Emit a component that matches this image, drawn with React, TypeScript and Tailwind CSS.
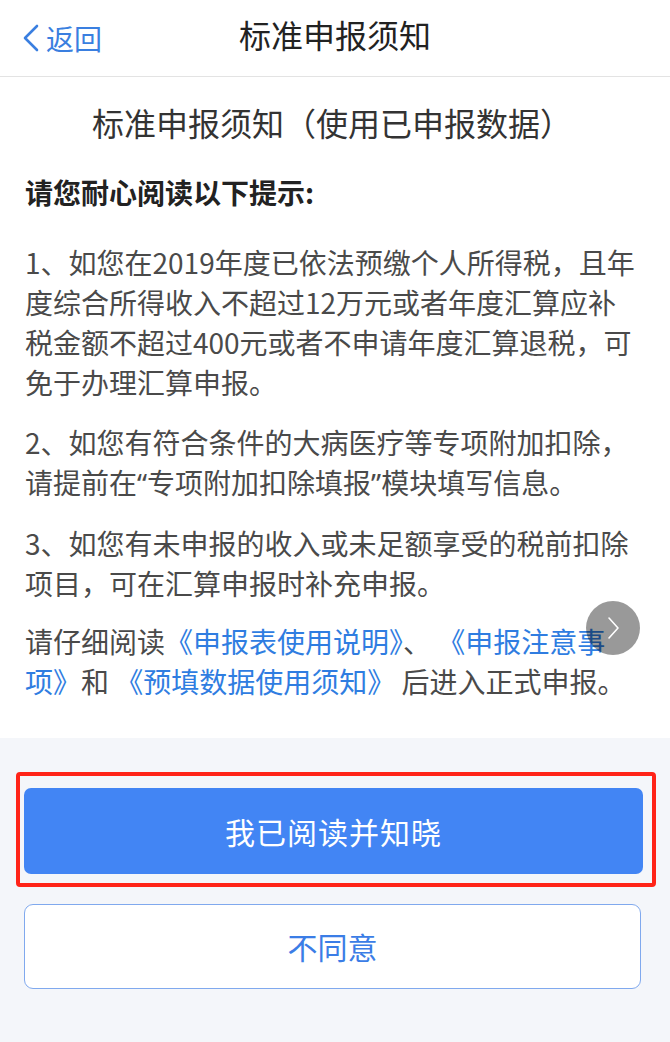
const font = { fontFamily: '"Noto Sans CJK SC", "Noto Sans", sans-serif' };
const latin = { fontFamily: '"Noto Sans", "Noto Sans CJK SC", sans-serif' };

const p1 = [
  '1、如您在2019年度已依法预缴个人所得税，且年',
  '度综合所得收入不超过12万元或者年度汇算应补',
  '税金额不超过400元或者不申请年度汇算退税，可',
  '免于办理汇算申报。',
];
const p3 = ['3、如您有未申报的收入或未足额享受的税前扣除', '项目，可在汇算申报时补充申报。'];

function Para({ lines, className = '' }: { lines: React.ReactNode[]; className?: string }) {
  return (
    <p className={`text-[28px] leading-[40px] text-[#4a4a4a] whitespace-nowrap ${className}`}>
      {lines.map((l, i) => (
        <span key={i} className="block">
          {l}
        </span>
      ))}
    </p>
  );
}

export default function App() {
  const p2 = [
    '2、如您有符合条件的大病医疗等专项附加扣除，',
    <>
      请提前在<span style={latin}>“</span>专项附加扣除填报<span style={latin}>”</span>模块填写信息。
    </>,
  ];

  return (
    <div className="w-[670px] h-[1042px] bg-[#f4f6fa] flex flex-col" style={font}>
      {/* header */}
      <div className="relative h-[77px] bg-white border-b border-[#e3e3e3] flex items-center justify-center shrink-0">
        <button type="button" className="absolute left-[22px] top-[20px] flex items-center gap-[6px] text-[#3a7fe0]">
          <svg width="18" height="30" viewBox="0 0 18 30" fill="none" stroke="currentColor" strokeWidth="2.6" strokeLinecap="round" strokeLinejoin="round">
            <path d="M15 3 L3 15 L15 27" />
          </svg>
          <span className="text-[28px] leading-[36px]">返回</span>
        </button>
        <h1 className="text-[32px] leading-[40px] text-[#222] -mt-[8px]">标准申报须知</h1>
      </div>

      {/* content */}
      <div className="relative bg-white px-[25px] pt-[25px] pb-[37px]">
        <h2 className="text-center text-[32px] leading-[40px] text-[#333] pr-[6px]">标准申报须知（使用已申报数据）</h2>
        <div className="mt-[30px] text-[28px] leading-[40px] font-bold text-[#222]">请您耐心阅读以下提示:</div>
        <Para lines={p1} className="mt-[30px]" />
        <Para lines={p2} className="mt-[20px]" />
        <Para lines={p3} className="mt-[20px]" />
        <p className="mt-[18px] text-[28px] leading-[40px] text-[#4a4a4a] whitespace-nowrap">
          <span className="block">
            请仔细阅读<span className="text-[#2f7de1]">《申报表使用说明》</span>、 <span className="text-[#2f7de1]">《申报注意事</span>
          </span>
          <span className="block">
            <span className="text-[#2f7de1]">项》</span>和 <span className="text-[#2f7de1]">《预填数据使用须知》</span> 后进入正式申报。
          </span>
        </p>

        <div className="absolute left-[586px] top-[524px] w-[54px] h-[54px] rounded-full bg-black/40 flex items-center justify-center">
          <svg width="14" height="24" viewBox="0 0 14 24" fill="none" stroke="white" strokeWidth="1.6" strokeLinecap="round" strokeLinejoin="round">
            <path d="M3 2 L12 12 L3 22" />
          </svg>
        </div>
      </div>

      {/* actions */}
      <div className="pt-[34px]">
        <div className="ml-[16px] mr-[14px] border-4 border-[#ff2318] rounded-[4px] pl-[4px] pr-[9px] pt-[12px] pb-[9px]">
          <button type="button" className="w-full h-[86px] rounded-[7px] bg-[#4285f4] text-white text-[30px] tracking-[1px]">
            我已阅读并知晓
          </button>
        </div>
        <button
          type="button"
          className="mt-[17px] ml-[24px] w-[617px] h-[85px] rounded-[9px] bg-white border border-[#80a9ee] text-[#3b7de6] text-[30px]"
        >
          不同意
        </button>
      </div>
    </div>
  );
}
